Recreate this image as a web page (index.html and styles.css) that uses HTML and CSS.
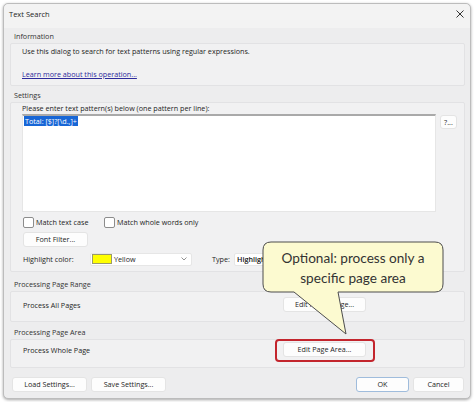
FILE: index.html
```html
<!DOCTYPE html>
<html lang="en">
<head>
    <meta charset="UTF-8">
    <meta name="viewport" content="width=device-width, initial-scale=1.0">
    <title>Text Search</title>
    <link rel="stylesheet" href="styles.css">
</head>
<body>
    <div class="dialog">
        <div class="titlebar">
            <span class="title">Text Search</span>
            <svg class="close" width="8" height="8" viewBox="0 0 8 8">
                <path d="M0.5 0.5 L7.5 7.5 M7.5 0.5 L0.5 7.5" stroke="#333" stroke-width="1" fill="none"/>
            </svg>
        </div>

        <div class="content">
            <div class="section-label label-info">Information</div>
            <div class="group group-info">
                <div class="line">Use this dialog to search for text patterns using regular expressions.</div>
                <a class="line link" href="#">Learn more about this operation...</a>
            </div>

            <div class="section-label label-settings">Settings</div>
            <div class="group group-settings">
                <div class="line prompt">Please enter text pattern(s) below (one pattern per line):</div>
                <div class="pattern-row">
                    <div class="pattern-box"><span class="selected">Total: [$]?[\d.,]+</span></div>
                    <button class="btn btn-help">?...</button>
                </div>
                <div class="checks">
                    <label class="check"><span class="box"></span>Match text case</label>
                    <label class="check"><span class="box"></span>Match whole words only</label>
                </div>
                <button class="btn btn-font">Font Filter...</button>
                <div class="highlight-row">
                    <span class="hl-label">Highlight color:</span>
                    <div class="combo combo-color">
                        <span class="swatch"></span>
                        <span class="combo-text">Yellow</span>
                        <svg class="chevron" width="6" height="4" viewBox="0 0 6 4">
                            <path d="M0.5 0.5 L3 3 L5.5 0.5" stroke="#777" stroke-width="0.8" fill="none"/>
                        </svg>
                    </div>
                    <span class="type-label">Type:</span>
                    <div class="combo combo-type"><span class="combo-text bold">Highlight</span></div>
                </div>
            </div>

            <div class="section-label label-range">Processing Page Range</div>
            <div class="group group-range">
                <div class="option-row">
                    <span class="option-text">Process All Pages</span>
                    <button class="btn btn-edit">Edit Page Range...</button>
                </div>
            </div>

            <div class="section-label label-area">Processing Page Area</div>
            <div class="group group-area">
                <div class="option-row">
                    <span class="option-text">Process Whole Page</span>
                    <span class="marked">
                        <button class="btn btn-edit">Edit Page Area...</button>
                    </span>
                </div>
            </div>
        </div>

        <div class="footer">
            <button class="btn btn-foot">Load Settings...</button>
            <button class="btn btn-foot">Save Settings...</button>
            <span class="spacer"></span>
            <button class="btn btn-ok">OK</button>
            <button class="btn btn-cancel">Cancel</button>
        </div>

        <!-- annotation balloon over the dialog -->
        <div class="callout">
            <svg class="callout-shape" width="184" height="96" viewBox="0 0 184 96">
                <path d="M9 1 H173 Q181 1 181 9 V43 Q181 51 173 51 H76 L84 93 L32 51 H9 Q1 51 1 43 V9 Q1 1 9 1 Z"
                      fill="#fcfad0" stroke="#4d4d4d" stroke-width="1"/>
            </svg>
            <div class="callout-text">Optional: process only a<br>specific page area</div>
        </div>
    </div>
</body>
</html>
```

FILE: styles.css
```css
body {
    margin: 0;
    background: #fff;
    font-family: "Open Sans", "Liberation Sans", sans-serif;
    font-size: 7.2px;
    color: #1e1e1e;
}

.dialog {
    position: relative;
    margin: 3px;
    width: 466px;
    height: 394px;
    border: 1px solid #bcbcbc;
    border-radius: 5px;
    background: #ededee;
    box-shadow: 0 1px 3px rgba(0, 0, 0, 0.35);
    display: flex;
    flex-direction: column;
}

.titlebar {
    height: 24px;
    background: #f3f3f3;
    border-radius: 5px 5px 0 0;
    display: flex;
    align-items: flex-start;
    justify-content: space-between;
    padding: 5px 6px 0 5px;
    box-sizing: border-box;
}

.title {
    line-height: 10px;
    font-size: 7.5px;
}

.close {
    margin-top: 1px;
}

.content {
    padding: 0 5px 0 6px;
}

.section-label {
    line-height: 14px;
    padding-left: 4px;
    color: #333;
}

.label-info {
    padding-top: 1px;
}

.label-settings {
    padding-top: 2px;
}

.label-range {
    padding-top: 5px;
}

.label-area {
    padding-top: 3px;
}

.group {
    background: #f1f1f2;
    border: 1px solid #e2e2e4;
    border-radius: 2px;
    padding: 0 0 0 11px;
}

.line {
    display: block;
    line-height: 14px;
}

.group-info {
    padding-bottom: 4px;
}

.link {
    margin-top: 9px;
    color: #2d2a9c;
    text-decoration: underline;
}

.group-settings {
    padding-bottom: 5px;
}

.prompt {
    line-height: 10px;
}

.pattern-row {
    display: flex;
    align-items: flex-start;
    gap: 4px;
    margin-top: 1px;
}

.pattern-box {
    width: 414px;
    height: 98px;
    box-sizing: border-box;
    background: #fff;
    border: 1px solid #e6e6e6;
    border-top: 2px solid #a9a9a9;
    padding: 0 1px;
}

.selected {
    background: #1766d6;
    color: #fff;
    line-height: 10px;
    display: inline-block;
    padding: 0 1px;
}

.btn {
    font-family: inherit;
    font-size: inherit;
    color: #1e1e1e;
    background: #fdfdfd;
    border: 1px solid #e4e4e4;
    border-radius: 3px;
    height: 15px;
    padding: 0;
    line-height: 13px;
    white-space: nowrap;
}

.btn-help {
    width: 17px;
    height: 14px;
    margin-top: 1px;
}

.checks {
    display: flex;
    height: 14px;
    align-items: center;
    margin-top: 3px;
    padding-left: 1px;
    white-space: nowrap;
}

.check {
    display: flex;
    align-items: center;
    gap: 2px;
    flex: 0 0 81px;
}

.box {
    width: 9px;
    height: 9px;
    background: #fff;
    border: 1px solid #8c8c8c;
    border-radius: 2px;
}

.btn-font {
    display: block;
    width: 65px;
    margin: 3px 0 0 1px;
}

.highlight-row {
    display: flex;
    align-items: center;
    height: 14px;
    margin-top: 5px;
    padding-left: 1px;
}

.hl-label {
    width: 67px;
}

.combo {
    height: 13px;
    box-sizing: border-box;
    background: #fff;
    border: 1px solid #e6e6e6;
    border-radius: 2px;
    display: flex;
    align-items: center;
}

.combo-color {
    width: 102px;
    padding-left: 1px;
}

.swatch {
    width: 20px;
    height: 10px;
    box-sizing: border-box;
    background: #ffff00;
    border: 1px solid #9a9a6a;
}

.combo-text {
    margin-left: 2px;
    flex: 1;
}

.bold {
    font-weight: 600;
    color: #111;
}

.chevron {
    margin-right: 4px;
}

.type-label {
    margin-left: 20px;
    width: 22px;
}

.combo-type {
    width: 203px;
}

.group-range {
    padding-top: 5px;
    padding-bottom: 9px;
}

.group-area {
    padding-top: 2px;
    padding-bottom: 10px;
}

.option-row {
    display: flex;
    align-items: center;
    height: 15px;
    padding-left: 1px;
}

.option-text {
    width: 260px;
}

.btn-edit {
    width: 83px;
}

.marked {
    position: relative;
    display: flex;
}

.marked::after {
    content: "";
    position: absolute;
    left: -8px;
    right: -9px;
    top: -3px;
    bottom: -5px;
    border: 2px solid #c3252d;
    border-radius: 4px;
}

.footer {
    display: flex;
    gap: 4px;
    margin-top: 9px;
    padding: 0 6px 0 8px;
}

.spacer {
    flex: 1;
}

.btn-foot {
    width: 75px;
}

.btn-ok {
    width: 53px;
    border-color: #9fbcdc;
}

.btn-cancel {
    width: 51px;
}

.callout {
    position: absolute;
    left: 258px;
    top: 237px;
    width: 184px;
    height: 96px;
}

.callout-shape {
    display: block;
}

.callout-text {
    position: absolute;
    left: 1px;
    top: 7px;
    width: 180px;
    text-align: center;
    font-family: Lato, "Liberation Sans", sans-serif;
    font-size: 13.6px;
    line-height: 20px;
    color: #333;
}
```
